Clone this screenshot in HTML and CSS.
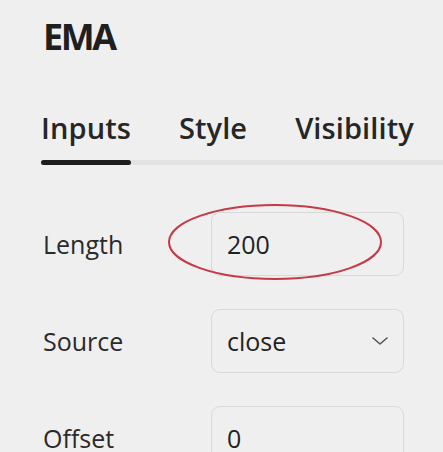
FILE: index.html
```html
<!DOCTYPE html>
<html>
<head>
<meta charset="utf-8">
<link rel="stylesheet" href="styles.css">
</head>
<body>
<div class="panel">
  <h1 class="title">EMA</h1>
  <div class="tabs">
    <div class="tab active">Inputs</div>
    <div class="tab">Style</div>
    <div class="tab">Visibility</div>
  </div>
  <div class="rows">
    <div class="row">
      <div class="label">Length</div>
      <div class="field highlighted">
        <span class="value">200</span>
        <svg class="ring" width="216" height="78" viewBox="0 0 216 78"><ellipse cx="108" cy="39" rx="106" ry="37" fill="none" stroke="#c43a46" stroke-width="2"/></svg>
      </div>
    </div>
    <div class="row">
      <div class="label">Source</div>
      <div class="field select">
        <span class="value">close</span>
        <svg class="chev" width="18" height="10" viewBox="0 0 18 10"><path d="M2 2 L9 8 L16 2" fill="none" stroke="#555" stroke-width="1.6" stroke-linecap="round" stroke-linejoin="round"/></svg>
      </div>
    </div>
    <div class="row">
      <div class="label">Offset</div>
      <div class="field"><span class="value">0</span></div>
    </div>
  </div>
</div>
</body>
</html>
```
FILE: styles.css
```css
html, body {
  margin: 0;
  padding: 0;
  background: #efefef;
}
body {
  font-family: "Open Sans", "Noto Sans", sans-serif;
  color: #1f1f1f;
  overflow: hidden;
  height: 452px;
}
.panel {
  padding: 13px 0 0 41px;
}
.title {
  margin: 0 0 0 2px;
  font-size: 36px;
  font-weight: 700;
  letter-spacing: -2.4px;
  line-height: 48px;
}
.tabs {
  margin-top: 48px;
  display: flex;
  gap: 46px;
  background: linear-gradient(#e2e2e2, #e2e2e2) left bottom / 100% 5px no-repeat;
}
.tab {
  display: flex;
  flex-direction: column;
  font-size: 29px;
  font-weight: 600;
  letter-spacing: 0.1px;
  line-height: 38px;
  color: #262626;
  padding-left: 2px;
}
.tab.active {
  padding-left: 0;
}
.tab::after {
  content: "";
  display: block;
  height: 5px;
  margin-top: 13px;
  border-radius: 3px;
}
.tab.active::after {
  background: #1e1e1e;
}
.rows {
  display: flex;
  flex-direction: column;
  gap: 33px;
  margin-top: 47px;
  padding-left: 2px;
}
.row {
  display: flex;
  align-items: center;
}
.label {
  width: 168px;
  font-size: 25px;
  color: #2a2a2a;
}
.field {
  position: relative;
  box-sizing: border-box;
  width: 193px;
  height: 64px;
  border: 1.5px solid #d9d9d9;
  border-radius: 9px;
  display: flex;
  align-items: center;
  padding: 0 15px;
  font-size: 25px;
  color: #222;
}
.field .value {
  flex: 1;
}
.ring {
  position: absolute;
  left: -45px;
  top: -10px;
}
.chev {
  margin-right: -1px;
}
```
